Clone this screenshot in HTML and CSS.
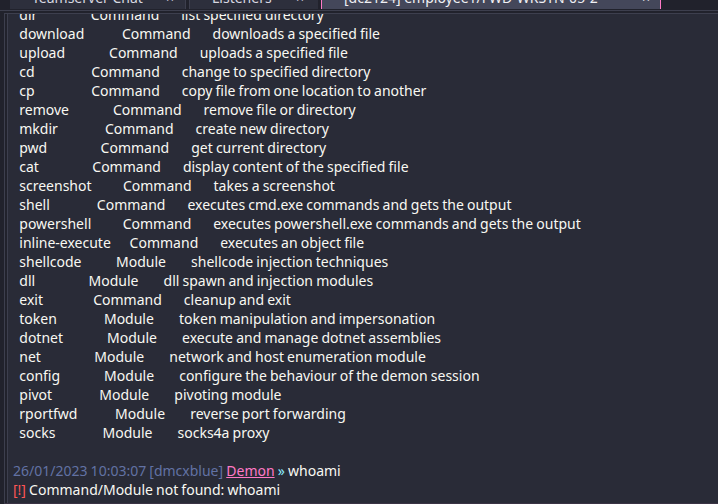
FILE: index.html
```html
<!DOCTYPE html>
<html lang="en">
<head>
    <meta charset="UTF-8">
    <meta name="viewport" content="width=device-width, initial-scale=1.0">
    <title>Havoc Console</title>
    <link rel="stylesheet" href="styles.css">
</head>
<body>
    <div class="window">
        <div class="tab-bar">
            <div class="tab tab-chat"><span class="tab-label">Teamserver Chat</span><span class="tab-close">×</span></div>
            <div class="tab tab-listeners"><span class="tab-label">Listeners</span><span class="tab-close">×</span></div>
            <div class="tab tab-session active"><span class="tab-label">[dc2124] employee1/FWD-WRSTN-05-2</span><span class="tab-close">×</span></div>
        </div>
        <div class="frame">
            <div class="console">
                <div class="output">
<div class="line">  dir                 Command       list specified directory</div>
<div class="line">  download            Command       downloads a specified file</div>
<div class="line">  upload              Command       uploads a specified file</div>
<div class="line">  cd                  Command       change to specified directory</div>
<div class="line">  cp                  Command       copy file from one location to another</div>
<div class="line">  remove              Command       remove file or directory</div>
<div class="line">  mkdir               Command       create new directory</div>
<div class="line">  pwd                 Command       get current directory</div>
<div class="line">  cat                 Command       display content of the specified file</div>
<div class="line">  screenshot          Command       takes a screenshot</div>
<div class="line">  shell               Command       executes cmd.exe commands and gets the output</div>
<div class="line">  powershell          Command       executes powershell.exe commands and gets the output</div>
<div class="line">  inline-execute      Command       executes an object file</div>
<div class="line">  shellcode           Module        shellcode injection techniques</div>
<div class="line">  dll                 Module        dll spawn and injection modules</div>
<div class="line">  exit                Command       cleanup and exit</div>
<div class="line">  token               Module        token manipulation and impersonation</div>
<div class="line">  dotnet              Module        execute and manage dotnet assemblies</div>
<div class="line">  net                 Module        network and host enumeration module</div>
<div class="line">  config              Module        configure the behaviour of the demon session</div>
<div class="line">  pivot               Module        pivoting module</div>
<div class="line">  rportfwd            Module        reverse port forwarding</div>
<div class="line">  socks               Module        socks4a proxy</div>
<div class="line"> </div>
<div class="line"><span class="ts">26/01/2023 10:03:07 [dmcxblue]</span> <span class="agent">Demon</span> <span class="arrow">»</span> whoami</div>
<div class="line"><span class="err">[!]</span> Command/Module not found: whoami</div>
                </div>
            </div>
        </div>
    </div>
</body>
</html>
```

FILE: styles.css
```css
 body {
     margin: 0;
     background-color: #21222c;
     color: #f8f8f2;
     font-family: "Noto Sans", "DejaVu Sans", sans-serif;
     font-size: 14px;
 }
 .window {
     height: 504px;
     display: flex;
     flex-direction: column;
     overflow: hidden;
 }
 .tab-bar {
     height: 10px;
     flex-shrink: 0;
     display: flex;
     padding-left: 10px;
     gap: 3px;
     border-bottom: 1px solid #3d3f4e;
     overflow: hidden;
 }
 .tab {
     display: flex;
     justify-content: space-between;
     height: 9px;
     overflow: hidden;
     background-color: #2d2f3c;
     color: #d8d8e0;
     box-sizing: border-box;
 }
 .tab-label,
 .tab-close {
     line-height: 19px;
     margin-top: -12px;
 }
 .tab-chat {
     width: 176px;
     padding: 0 11px 0 22px;
     border-right: 1px solid #3d3f4e;
 }
 .tab-listeners {
     width: 129px;
     padding: 0 14px 0 22px;
     border-left: 1px solid #3d3f4e;
 }
 .tab-session {
     width: 340px;
     padding: 0 10px 0 22px;
 }
 .tab.active {
     background-color: #44475a;
     color: #f0f0f4;
     border-left: 1px solid #ff79c6;
     border-right: 1px solid #ff79c6;
 }
 .frame {
     flex: 1;
     display: flex;
     min-height: 0;
     margin-top: 2px;
     margin-left: 4px;
     padding-left: 2px;
     border-left: 1px solid #3d3f4e;
     border-top: 1px solid #3d3f4e;
     border-bottom: 1px solid #3a3344;
 }
 .console {
     flex: 1;
     display: flex;
     flex-direction: column;
     justify-content: flex-end;
     overflow: hidden;
     background-color: #292b37;
     border-left: 1px solid #3d3f4e;
     padding: 0 0 4px 5px;
 }
 .output {
     flex-shrink: 0;
 }
 .line {
     white-space: pre;
     line-height: 19px;
     height: 19px;
     word-spacing: -0.5px;
 }
 .ts {
     color: #6272a4;
 }
 .agent {
     color: #ff79c6;
     text-decoration: underline;
 }
 .arrow {
     color: #8be9fd;
 }
 .err {
     color: #ff5555;
 }
```
